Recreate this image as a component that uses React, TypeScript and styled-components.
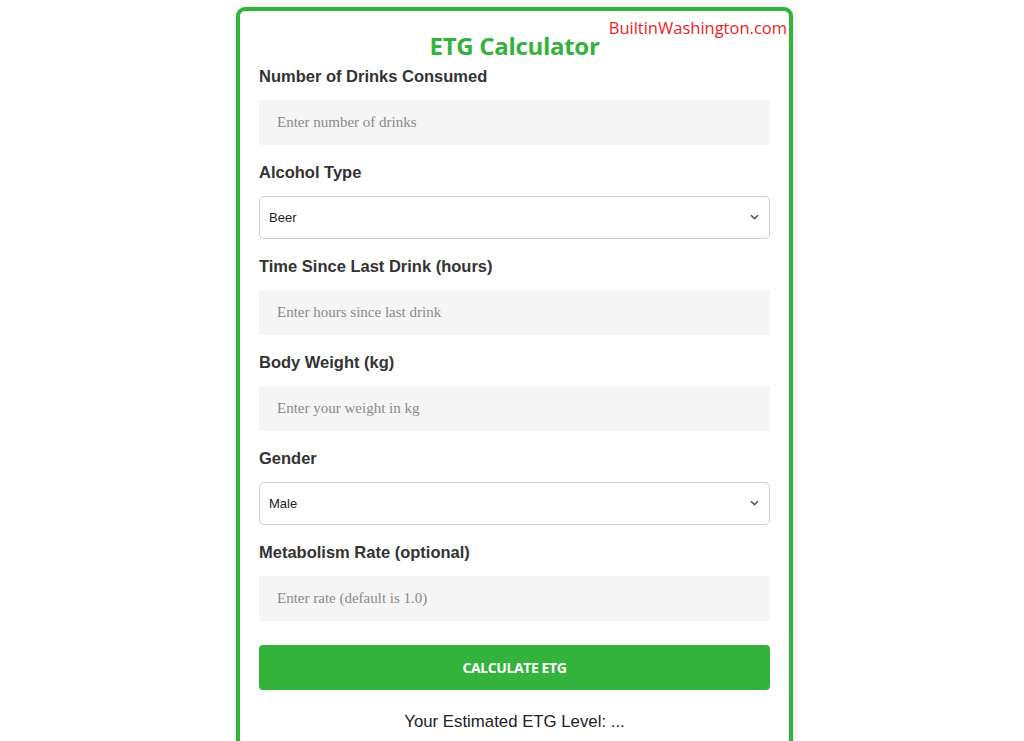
import React from "react";
import styled, { createGlobalStyle } from "styled-components";

const Global = createGlobalStyle`
  html, body { margin: 0; padding: 0; background: #fff; }
  body { font-family: "Liberation Sans", Arial, sans-serif; }
  * { box-sizing: border-box; }
`;

const Page = styled.div`
  display: flex;
  justify-content: center;
  align-items: flex-start;
  padding: 7px 0 0 5px;
  height: 741px;
  overflow: hidden;
`;

const Card = styled.div`
  position: relative;
  width: 557px;
  border: 4px solid #34b33c;
  border-radius: 9px;
  padding: 20px 19px 80px;
  background: #fff;
  box-shadow: 0 0 6px rgba(0, 0, 0, 0.12);
`;

const Watermark = styled.div`
  position: absolute;
  top: 5px;
  right: 2px;
  font-family: "Open Sans", "Noto Sans", sans-serif;
  font-size: 16.5px;
  color: #ee1c25;
`;

const Title = styled.h1`
  margin: 0 0 5px;
  text-align: center;
  font-family: "Open Sans", "Noto Sans", sans-serif;
  font-weight: 700;
  font-size: 24px;
  line-height: 29px;
  padding-bottom: 2px;
  color: #35b23c;
  letter-spacing: -0.3px;
`;

const Field = styled.div<{ $last?: boolean }>`
  display: flex;
  flex-direction: column;
  margin-bottom: ${(p) => (p.$last ? "24px" : "18px")};
`;

const Label = styled.label`
  display: block;
  font-family: "Liberation Sans", Arial, sans-serif;
  font-weight: 700;
  font-size: 16.5px;
  line-height: 18px;
  color: #333;
  margin-bottom: 15px;
`;

const Input = styled.input`
  width: 100%;
  height: 45px;
  border: none;
  outline: none;
  background: #f5f5f5;
  padding: 0 18px;
  font-family: "Liberation Serif", "DejaVu Serif", serif;
  font-size: 15px;
  color: #333;
  &::placeholder { color: #8a8a8a; }
`;

const SelectWrap = styled.div`
  position: relative;
`;

const Select = styled.select`
  appearance: none;
  width: 100%;
  height: 43px;
  border: 1px solid #cfcfcf;
  border-radius: 5px;
  background: #fff;
  padding: 0 9px;
  font-family: "Liberation Sans", Arial, sans-serif;
  font-size: 13px;
  color: #222;
  outline: none;
`;

const Chevron = styled.svg`
  position: absolute;
  right: 11px;
  top: 18px;
  pointer-events: none;
`;

const Button = styled.button`
  display: block;
  width: 100%;
  height: 45px;
  border: none;
  border-radius: 4px;
  background: #34b33c;
  color: #fff;
  font-family: "Open Sans", "Noto Sans", sans-serif;
  font-weight: 700;
  font-size: 14px;
  letter-spacing: -0.4px;
  cursor: pointer;
`;

const Result = styled.div`
  margin-top: 22px;
  text-align: center;
  font-family: "Liberation Sans", Arial, sans-serif;
  font-size: 16.8px;
  color: #222;
`;

const Arrow = () => (
  <Chevron width="9" height="6" viewBox="0 0 9 6">
    <path d="M1 1.2 L4.5 4.6 L8 1.2" fill="none" stroke="#555" strokeWidth="1.6" />
  </Chevron>
);

export default function App() {
  return (
    <>
      <Global />
      <Page>
        <Card>
          <Watermark>BuiltinWashington.com</Watermark>
          <Title>ETG Calculator</Title>
          <Field>
            <Label>Number of Drinks Consumed</Label>
            <Input placeholder="Enter number of drinks" />
          </Field>
          <Field>
            <Label>Alcohol Type</Label>
            <SelectWrap>
              <Select defaultValue="beer">
                <option value="beer">Beer</option>
                <option value="wine">Wine</option>
                <option value="spirits">Spirits</option>
              </Select>
              <Arrow />
            </SelectWrap>
          </Field>
          <Field>
            <Label>Time Since Last Drink (hours)</Label>
            <Input placeholder="Enter hours since last drink" />
          </Field>
          <Field>
            <Label>Body Weight (kg)</Label>
            <Input placeholder="Enter your weight in kg" />
          </Field>
          <Field>
            <Label>Gender</Label>
            <SelectWrap>
              <Select defaultValue="male">
                <option value="male">Male</option>
                <option value="female">Female</option>
              </Select>
              <Arrow />
            </SelectWrap>
          </Field>
          <Field $last>
            <Label>Metabolism Rate (optional)</Label>
            <Input placeholder="Enter rate (default is 1.0)" />
          </Field>
          <Button>CALCULATE ETG</Button>
          <Result>Your Estimated ETG Level: ...</Result>
        </Card>
      </Page>
    </>
  );
}
